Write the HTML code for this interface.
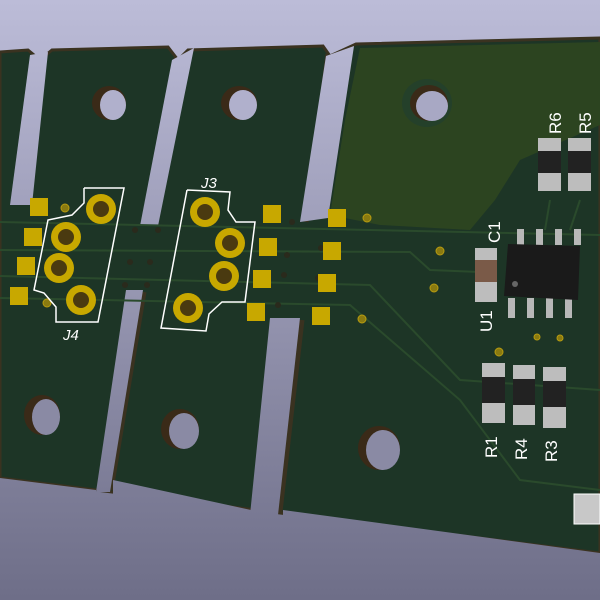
<!DOCTYPE html><html><head><style>html,body{margin:0;padding:0;width:600px;height:600px;overflow:hidden}</style></head><body>
<svg width="600" height="600" viewBox="0 0 600 600" xmlns="http://www.w3.org/2000/svg" font-family="Liberation Sans, sans-serif">
<defs><linearGradient id="bg" gradientUnits="userSpaceOnUse" x1="0" y1="0" x2="0" y2="600"><stop offset="0" stop-color="#bcbcd8"/><stop offset="1" stop-color="#6e6e88"/></linearGradient></defs>
<rect width="600" height="600" fill="url(#bg)"/>
<polygon points="0,52 28,50 40,60 52,50 168,47 178,60 188,50 323,46 330,56 356,44 600,38 600,553 0,478" fill="#1d3526" stroke="#3a3220" stroke-width="3"/>
<polygon points="360,48 600,42 600,125 520,160 495,200 470,230 380,225 330,215 345,120" fill="#2c4420"/>
<g stroke="#3a3220" stroke-width="5" fill="none">
<path d="M36,56 L20,205"/><path d="M176,58 L152,224"/><path d="M328,54 L306,222"/><path d="M144,292 L111,490"/><path d="M302,320 L280,512"/>
</g>
<g fill="url(#bg)">
<polygon points="30,55 48,52 32,205 10,205"/>
<polygon points="172,60 194,48 158,226 140,226"/>
<polygon points="326,56 354,46 328,218 300,222"/>
<polygon points="126,290 143,290 110,492 96,492"/>
<polygon points="270,318 300,318 278,515 250,515"/>
<polygon points="0,478 96,490 96,600 0,600"/>
<polygon points="113,480 251,510 251,600 113,600"/>
<polygon points="283,510 600,553 600,600 283,600"/>
</g>
<g stroke="#2a4a2c" stroke-width="2" fill="none">
<path d="M0,222 L600,235"/><path d="M0,250 L410,252 L430,270 L480,272"/><path d="M0,276 L370,285 L460,380 L600,390"/><path d="M0,298 L350,305 L460,400 L520,480 L600,490"/>
<path d="M550,200 L545,230"/><path d="M580,200 L570,230"/>
</g>
<ellipse cx="427" cy="103" rx="25" ry="24" fill="#24402a"/>
<ellipse cx="429" cy="103" rx="19" ry="18" fill="#3a2a18"/>
<ellipse cx="432" cy="106" rx="16" ry="15" fill="#a8a8c4"/>
<ellipse cx="109" cy="103" rx="17" ry="17" fill="#3a2a18"/><ellipse cx="113" cy="105" rx="13" ry="15" fill="#b0b0cc"/>
<ellipse cx="239" cy="103" rx="18" ry="17" fill="#3a2a18"/><ellipse cx="243" cy="105" rx="14" ry="15" fill="#b0b0cc"/>
<ellipse cx="42" cy="415" rx="18" ry="20" fill="#3a2a18"/><ellipse cx="46" cy="417" rx="14" ry="18" fill="#8a8aa4"/>
<ellipse cx="180" cy="429" rx="19" ry="20" fill="#3a2a18"/><ellipse cx="184" cy="431" rx="15" ry="18" fill="#8a8aa4"/>
<ellipse cx="379" cy="448" rx="21" ry="22" fill="#3a2a18"/><ellipse cx="383" cy="450" rx="17" ry="20" fill="#8a8aa4"/>
<g fill="#8a7a10" stroke="#b89c10" stroke-width="1">
<circle cx="65" cy="208" r="4"/><circle cx="47" cy="303" r="4"/><circle cx="367" cy="218" r="4"/><circle cx="440" cy="251" r="4"/><circle cx="434" cy="288" r="4"/><circle cx="362" cy="319" r="4"/><circle cx="499" cy="352" r="4"/><circle cx="537" cy="337" r="3"/><circle cx="560" cy="338" r="3"/>
</g>
<g fill="#2a2a1c"><circle cx="292" cy="222" r="3"/><circle cx="287" cy="255" r="3"/><circle cx="284" cy="275" r="3"/><circle cx="278" cy="305" r="3"/><circle cx="135" cy="230" r="3"/><circle cx="158" cy="230" r="3"/><circle cx="130" cy="262" r="3"/><circle cx="150" cy="262" r="3"/><circle cx="125" cy="285" r="3"/><circle cx="147" cy="285" r="3"/><circle cx="318" cy="278" r="3"/><circle cx="321" cy="248" r="3"/></g>
<g fill="#c8a800">
<rect x="30" y="198" width="18" height="18"/><rect x="24" y="228" width="18" height="18"/><rect x="17" y="257" width="18" height="18"/><rect x="10" y="287" width="18" height="18"/>
<rect x="263" y="205" width="18" height="18"/><rect x="259" y="238" width="18" height="18"/><rect x="253" y="270" width="18" height="18"/><rect x="247" y="303" width="18" height="18"/>
<rect x="328" y="209" width="18" height="18"/><rect x="323" y="242" width="18" height="18"/><rect x="318" y="274" width="18" height="18"/><rect x="312" y="307" width="18" height="18"/>
<circle cx="101" cy="209" r="15"/><circle cx="66" cy="237" r="15"/><circle cx="59" cy="268" r="15"/><circle cx="81" cy="300" r="15"/>
<circle cx="205" cy="212" r="15"/><circle cx="230" cy="243" r="15"/><circle cx="224" cy="276" r="15"/><circle cx="188" cy="308" r="15"/>
</g>
<g fill="#4a3a10">
<circle cx="101" cy="209" r="8"/><circle cx="66" cy="237" r="8"/><circle cx="59" cy="268" r="8"/><circle cx="81" cy="300" r="8"/>
<circle cx="205" cy="212" r="8"/><circle cx="230" cy="243" r="8"/><circle cx="224" cy="276" r="8"/><circle cx="188" cy="308" r="8"/>
</g>
<g fill="none" stroke="#fff" stroke-width="1.5">
<polyline points="84,188 124,188 98,322 56,322 56,307 44,293 34,290 48,220 72,215 84,203 84,188"/>
<polyline points="187,190 230,192 228,210 236,222 255,222 245,302 222,302 209,314 206,331 161,328 187,190"/>
</g>
<g fill="#fff" font-size="15" font-style="italic"><text x="201" y="188">J3</text><text x="63" y="340">J4</text></g>
<g fill="#b8b8b8">
<rect x="517" y="229" width="7" height="16"/><rect x="536" y="229" width="7" height="16"/><rect x="555" y="229" width="7" height="16"/><rect x="574" y="229" width="7" height="16"/>
<rect x="508" y="298" width="7" height="20"/><rect x="527" y="298" width="7" height="20"/><rect x="546" y="298" width="7" height="20"/><rect x="565" y="298" width="7" height="20"/>
</g>
<polygon points="508,244 580,246 578,300 504,296" fill="#1a1a1a"/>
<circle cx="515" cy="284" r="3" fill="#666"/>
<rect x="475" y="248" width="22" height="54" fill="#bdbdbd"/><rect x="475" y="260" width="22" height="22" fill="#7a5a48"/>
<rect x="538" y="138" width="23" height="53" fill="#bdbdbd"/><rect x="538" y="151" width="23" height="22" fill="#222"/>
<rect x="568" y="138" width="23" height="53" fill="#bdbdbd"/><rect x="568" y="151" width="23" height="22" fill="#222"/>
<rect x="482" y="363" width="23" height="60" fill="#bdbdbd"/><rect x="482" y="377" width="23" height="26" fill="#222"/>
<rect x="513" y="365" width="22" height="60" fill="#bdbdbd"/><rect x="513" y="379" width="22" height="26" fill="#222"/>
<rect x="543" y="367" width="23" height="61" fill="#bdbdbd"/><rect x="543" y="381" width="23" height="26" fill="#222"/>
<rect x="574" y="494" width="26" height="30" fill="#c8c8c8" stroke="#fff"/>
<g fill="#fff" font-size="17">
<text transform="translate(561,134) rotate(-90)">R6</text>
<text transform="translate(591,134) rotate(-90)">R5</text>
<text transform="translate(500,243) rotate(-90)">C1</text>
<text transform="translate(492,332) rotate(-90)">U1</text>
<text transform="translate(497,458) rotate(-90)">R1</text>
<text transform="translate(527,460) rotate(-90)">R4</text>
<text transform="translate(557,462) rotate(-90)">R3</text>
</g>
</svg>
</body></html>
